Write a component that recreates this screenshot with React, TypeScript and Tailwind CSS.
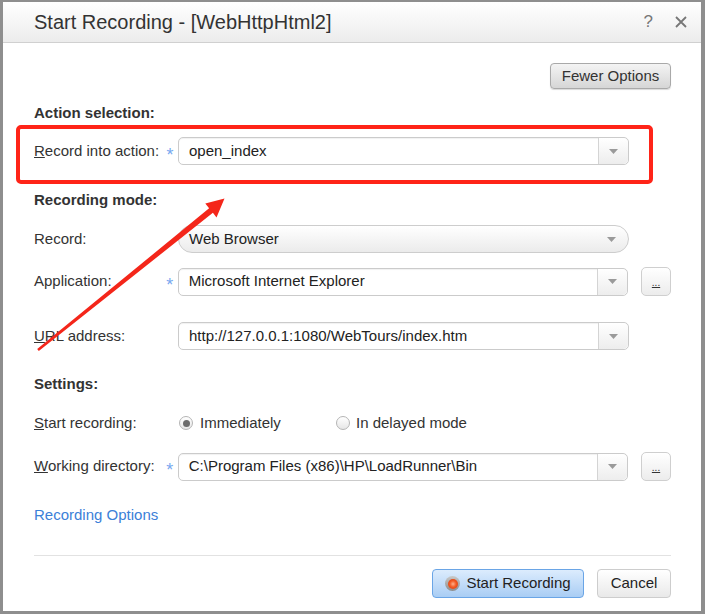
import React from 'react';

const font = { fontFamily: '"Liberation Sans", Arial, sans-serif' };

function Caret() {
  return (
    <svg width="9" height="5" viewBox="0 0 9 5" className="block">
      <path d="M0 0 L9 0 L4.5 5 Z" fill="#9a9a9a" />
    </svg>
  );
}

function Combo({ value }: { value: string }) {
  return (
    <div className="flex h-[28px] w-[451px] rounded-[5px] border border-[#cbcbcb] bg-white shadow-[inset_0_1px_1px_rgba(0,0,0,0.06)]">
      <div className="flex flex-1 items-center pl-[10px] text-[15px] text-[#222]">{value}</div>
      <div className="flex w-[30px] items-center justify-center rounded-r-[5px] border-l border-[#d4d4d4] bg-gradient-to-b from-white to-[#ededed]">
        <Caret />
      </div>
    </div>
  );
}

function Browse() {
  return (
    <button className="ml-[13px] flex h-[29px] w-[30px] items-end justify-center rounded-[5px] border border-[#cfcfcf] bg-gradient-to-b from-white to-[#ececec] pb-[7px] text-[10px] leading-none text-[#333] underline">
      ...
    </button>
  );
}

function Star({ show = true }: { show?: boolean }) {
  return (
    <div className="flex w-[16px] items-center justify-center pt-[7px] text-[18px] leading-none text-[#78a8f0]">
      {show ? '*' : ''}
    </div>
  );
}

function Label({ children }: { children: React.ReactNode }) {
  return <div className="w-[128px] text-[15px] text-[#333]">{children}</div>;
}

function Heading({ children, className = '' }: { children: React.ReactNode; className?: string }) {
  return (
    <div className={`flex h-[20px] items-center text-[15px] font-bold text-[#333] ${className}`}>{children}</div>
  );
}

function Radio({ checked }: { checked: boolean }) {
  return (
    <span className="flex h-[14px] w-[14px] items-center justify-center rounded-full border border-[#b5b5b5] bg-gradient-to-b from-white to-[#e6e6e6]">
      {checked && <span className="h-[7px] w-[7px] rounded-full bg-[#6b6b6b]" />}
    </span>
  );
}

export default function App() {
  return (
    <div className="relative h-[614px] w-[705px] overflow-hidden" style={font}>
      <div className="flex h-full w-full flex-col border-b-[3px] border-l-[3px] border-r-4 border-t-2 border-[#8e8e8e] bg-white">
        {/* title bar */}
        <div className="flex h-[41px] items-center border-b border-[#d0d0d0] bg-gradient-to-b from-white to-[#ececec] pl-[31px] pr-[14px]">
          <div className="flex-1 text-[20px] text-[#333]">Start Recording - [WebHttpHtml2]</div>
          <div className="text-[17px] text-[#777]">?</div>
          <svg width="12" height="12" viewBox="0 0 12 12" className="ml-[22px]">
            <path d="M1 1 L11 11 M11 1 L1 11" stroke="#777" strokeWidth="1.8" />
          </svg>
        </div>

        {/* body */}
        <div className="flex flex-col pl-[31px] pr-[30px]">
          <div className="mt-[20px] flex justify-end">
            <button className="h-[26px] w-[121px] rounded-[4px] border border-[#a9a9a9] bg-gradient-to-b from-[#f4f4f4] to-[#d6d6d6] text-[15px] text-[#333] shadow-[0_1px_1px_rgba(0,0,0,0.15)]">
              Fewer Options
            </button>
          </div>

          <Heading className="mt-[14px]">Action selection:</Heading>
          <div className="mt-[14px] flex h-[28px] items-center">
            <Label>
              <span className="underline">R</span>ecord into action:
            </Label>
            <Star />
            <Combo value="open_index" />
          </div>

          <Heading className="mt-[25px]">Recording mode:</Heading>
          <div className="mt-[15px] flex h-[28px] items-center">
            <Label>Record:</Label>
            <Star show={false} />
            <div className="flex h-[28px] w-[451px] items-center rounded-full border border-[#cdcdcd] bg-gradient-to-b from-white to-[#ebebeb] pl-[10px] pr-[12px]">
              <div className="flex-1 text-[15px] text-[#222]">Web Browser</div>
              <Caret />
            </div>
          </div>

          <div className="mt-[14px] flex h-[29px] items-center">
            <Label>Application:</Label>
            <Star />
            <Combo value="Microsoft Internet Explorer" />
            <Browse />
          </div>

          <div className="mt-[26px] flex h-[28px] items-center">
            <Label>
              <span className="underline">U</span>RL address:
            </Label>
            <Star show={false} />
            <Combo value="http://127.0.0.1:1080/WebTours/index.htm" />
          </div>

          <Heading className="mt-[24px]">Settings:</Heading>
          <div className="mt-[15px] flex h-[28px] items-center text-[15px] text-[#333]">
            <Label>
              <span className="underline">S</span>tart recording:
            </Label>
            <Star show={false} />
            <div className="flex w-[158px] items-center pl-[1px]">
              <Radio checked />
              <span className="ml-[7px]">Immediately</span>
            </div>
            <div className="flex items-center">
              <Radio checked={false} />
              <span className="ml-[6px]">In delayed mode</span>
            </div>
          </div>

          <div className="mt-[15px] flex h-[29px] items-center">
            <Label>
              <span className="underline">W</span>orking directory:
            </Label>
            <Star />
            <Combo value="C:\Program Files (x86)\HP\LoadRunner\Bin" />
            <Browse />
          </div>

          <div className="mt-[24px] flex h-[20px] items-center text-[15px] text-[#3b80d8]">Recording Options</div>

          <div className="mt-[30px] h-px bg-[#e2e2e2]" />

          <div className="mt-[13px] flex justify-end gap-[13px]">
            <button className="flex h-[29px] w-[152px] items-center justify-center rounded-[4px] border border-[#6aa5e6] bg-gradient-to-b from-[#dcecfd] to-[#a9cdf4] text-[15px] text-[#222]">
              <span className="mr-[6px] flex h-[15px] w-[15px] items-center justify-center rounded-full bg-gradient-to-b from-[#c9c9c9] to-[#8d8d8d]">
                <span className="h-[10px] w-[10px] rounded-full bg-[radial-gradient(circle_at_50%_50%,#ffb08a_0%,#f25a22_45%,#d8380e_100%)]" />
              </span>
              Start Recording
            </button>
            <button className="h-[29px] w-[74px] rounded-[4px] border border-[#cdcdcd] bg-gradient-to-b from-white to-[#e9e9e9] text-[15px] text-[#222]">
              Cancel
            </button>
          </div>
        </div>
      </div>

      {/* annotation: red highlight box */}
      <div className="pointer-events-none absolute left-[16px] top-[125px] h-[59px] w-[637px] rounded-[5px] border-4 border-[#ff2418]" />

      {/* annotation: red arrow */}
      <svg className="pointer-events-none absolute left-0 top-0" width="705" height="614" viewBox="0 0 705 614">
        <polygon
          points="38.8,351 212.9,212.8 216.5,217.6 224.5,198.5 205.3,203.6 209.1,208.3 37.2,349"
          fill="#f4261a"
        />
      </svg>
    </div>
  );
}
